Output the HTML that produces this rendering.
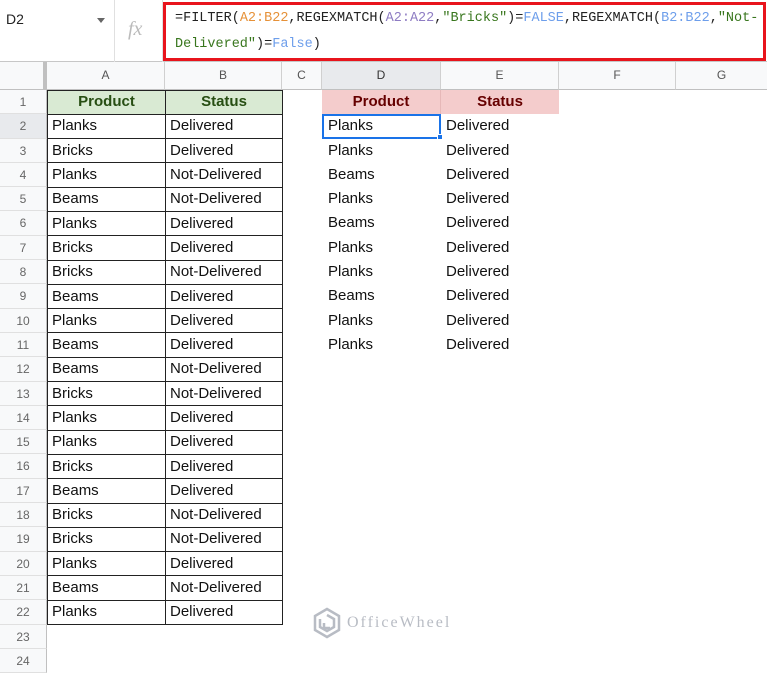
<!DOCTYPE html>
<html><head><meta charset="utf-8"><style>
*{margin:0;padding:0;box-sizing:border-box}
body{width:767px;height:663px;overflow:hidden;background:#fff;font-family:"Liberation Sans",Arial,sans-serif;position:relative}
.a{position:absolute}
.fb{left:0;top:0;width:767px;height:62px;background:#fff;border-bottom:1px solid #c7c7c7}
.mono{font-family:"Liberation Mono",monospace;font-size:13.5px;color:#222}
.ch{top:62px;height:28px;background:#f8f9fa;border-right:1px solid #d0d0d0;border-bottom:1px solid #c0c0c0;font-size:12px;color:#555;text-align:center;line-height:27px}
.rh{left:0;width:47px;height:24.3px;background:#f8f9fa;border-bottom:1px solid #e0e0e0;border-right:1px solid #c0c0c0;font-size:12px;color:#666;text-align:center;line-height:24px}
table{border-collapse:collapse;position:absolute;left:47px;top:89.5px}
td{border:1px solid #222;height:24.3px;padding:0 0 0 4px;font-size:15px;color:#111;line-height:22px}
td.a1{width:118px}td.b1{width:117px}
.hg{background:#d9ead3;color:#274e13;font-weight:bold;text-align:center;padding:0}
.t{font-size:15px;color:#111;height:24.3px;line-height:24px}
</style></head><body>
<div class="a fb"></div>
<div class="a" style="left:0;top:0;width:115px;height:62px;border-right:1px solid #e0e0e0"></div>
<div class="a" style="left:6px;top:11px;font-size:14px;color:#222">D2</div>
<div class="a" style="left:97px;top:18px;width:0;height:0;border-left:4px solid transparent;border-right:4px solid transparent;border-top:5px solid #666"></div>
<div class="a" style="left:115px;top:0;width:48px;height:62px;border-right:1px solid #e0e0e0"></div>
<div class="a" style="left:128px;top:18px;font-family:'Liberation Serif',serif;font-style:italic;font-size:20px;color:#bbb">fx</div>
<div class="a" style="left:163px;top:2px;width:603px;height:59px;border:3px solid #e8141c"></div>
<div class="a mono" style="left:175px;top:11px;white-space:nowrap">=FILTER(<span style="color:#e69138">A2:B22</span>,REGEXMATCH(<span style="color:#8e7cc3">A2:A22</span>,<span style="color:#38761d">"Bricks"</span>)=<span style="color:#6d9eeb">FALSE</span>,REGEXMATCH(<span style="color:#6d9eeb">B2:B22</span>,<span style="color:#38761d">"Not-</span></div>
<div class="a mono" style="left:175px;top:37px;white-space:nowrap"><span style="color:#38761d">Delivered"</span>)=<span style="color:#6d9eeb">False</span>)</div>

<div class="a ch" style="left:0;width:47px;border-right:4px solid #c0c0c0"></div>
<div class="a ch" style="left:47px;width:118px">A</div>
<div class="a ch" style="left:165px;width:117px">B</div>
<div class="a ch" style="left:282px;width:40px">C</div>
<div class="a ch" style="left:322px;width:119px;background:#e8eaed;color:#333">D</div>
<div class="a ch" style="left:441px;width:118px">E</div>
<div class="a ch" style="left:559px;width:117px">F</div>
<div class="a ch" style="left:676px;width:91px;border-right:none">G</div>

<div class="a" style="left:0;top:90px">
<div class="rh">1</div><div class="rh" style="background:#e8eaed">2</div><div class="rh">3</div><div class="rh">4</div><div class="rh">5</div><div class="rh">6</div><div class="rh">7</div><div class="rh">8</div><div class="rh">9</div><div class="rh">10</div><div class="rh">11</div><div class="rh">12</div><div class="rh">13</div><div class="rh">14</div><div class="rh">15</div><div class="rh">16</div><div class="rh">17</div><div class="rh">18</div><div class="rh">19</div><div class="rh">20</div><div class="rh">21</div><div class="rh">22</div><div class="rh">23</div><div class="rh">24</div>
</div>

<table>
<tr><td class="a1 hg">Product</td><td class="b1 hg">Status</td></tr>
<tr><td>Planks</td><td>Delivered</td></tr>
<tr><td>Bricks</td><td>Delivered</td></tr>
<tr><td>Planks</td><td>Not-Delivered</td></tr>
<tr><td>Beams</td><td>Not-Delivered</td></tr>
<tr><td>Planks</td><td>Delivered</td></tr>
<tr><td>Bricks</td><td>Delivered</td></tr>
<tr><td>Bricks</td><td>Not-Delivered</td></tr>
<tr><td>Beams</td><td>Delivered</td></tr>
<tr><td>Planks</td><td>Delivered</td></tr>
<tr><td>Beams</td><td>Delivered</td></tr>
<tr><td>Beams</td><td>Not-Delivered</td></tr>
<tr><td>Bricks</td><td>Not-Delivered</td></tr>
<tr><td>Planks</td><td>Delivered</td></tr>
<tr><td>Planks</td><td>Delivered</td></tr>
<tr><td>Bricks</td><td>Delivered</td></tr>
<tr><td>Beams</td><td>Delivered</td></tr>
<tr><td>Bricks</td><td>Not-Delivered</td></tr>
<tr><td>Bricks</td><td>Not-Delivered</td></tr>
<tr><td>Planks</td><td>Delivered</td></tr>
<tr><td>Beams</td><td>Not-Delivered</td></tr>
<tr><td>Planks</td><td>Delivered</td></tr>
</table>

<div class="a" style="left:322px;top:90px;width:119px;height:24px;background:#f4cccc;color:#660000;font-weight:bold;font-size:15px;text-align:center;line-height:24px;border-right:1px solid #e6b8b8">Product</div>
<div class="a" style="left:441px;top:90px;width:118px;height:24px;background:#f4cccc;color:#660000;font-weight:bold;font-size:15px;text-align:center;line-height:24px">Status</div>

<div class="a" style="left:328px;top:114.3px">
<div class="t">Planks</div><div class="t">Planks</div><div class="t">Beams</div><div class="t">Planks</div><div class="t">Beams</div><div class="t">Planks</div><div class="t">Planks</div><div class="t">Beams</div><div class="t">Planks</div><div class="t">Planks</div>
</div>
<div class="a" style="left:446px;top:114.3px">
<div class="t">Delivered</div><div class="t">Delivered</div><div class="t">Delivered</div><div class="t">Delivered</div><div class="t">Delivered</div><div class="t">Delivered</div><div class="t">Delivered</div><div class="t">Delivered</div><div class="t">Delivered</div><div class="t">Delivered</div>
</div>
<div class="a" style="left:322px;top:113.5px;width:119px;height:25px;border:2px solid #1a73e8"></div>
<div class="a" style="left:437px;top:134px;width:6px;height:6px;background:#1a73e8;border:1px solid #fff"></div>

<svg class="a" style="left:310px;top:606px" width="34" height="34" viewBox="0 0 34 34"><g fill="none" stroke="#b8bcc4" stroke-width="2.5"><path d="M17 3 L29 10 L29 24 L17 31 L5 24 L5 10 Z"/><path d="M17 9 L24 13 L24 21 L17 25 L10 21 L10 13"/><path d="M14 17 L14 22 L20 22"/></g></svg>
<div class="a" style="left:347px;top:614px;font-family:'Liberation Serif',serif;font-size:16px;letter-spacing:2px;color:#b8bcc4">OfficeWheel</div>
</body></html>
